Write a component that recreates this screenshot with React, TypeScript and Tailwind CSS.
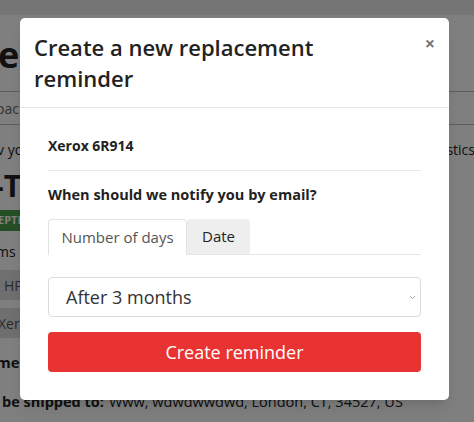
import { ChevronDown } from 'lucide-react'

const font = { fontFamily: '"Open Sans", "Liberation Sans", sans-serif' }

function BackgroundPage() {
  return (
    <div className="flex flex-col bg-white text-[#222]">
      <div className="h-[15px] bg-[#eaeaea]" />
      <div className="h-[76px] flex items-center pt-[4px] text-[36px] font-bold leading-none -ml-[2px]">e</div>
      <div className="h-[34px] flex items-center border-y border-[#bbb] text-[14px] text-[#666] -ml-[4px]">oac</div>
      <div className="h-[48px] flex items-center text-[14px] whitespace-nowrap -ml-[3px]">
        <span>v your</span>
        <span className="ml-[409px]">stics</span>
      </div>
      <div className="h-[26px] flex items-center text-[30px] font-bold leading-none -ml-[6px]">-T8</div>
      <div className="h-[37px] flex items-center pt-[6px]">
        <span className="bg-[#4a9d4c] text-white text-[11px] font-bold px-[4px] py-[2px] -ml-[6px]">EPTED</span>
      </div>
      <div className="h-[30px] flex items-center text-[14px] -ml-[4px]">ms</div>
      <div className="h-[38px] flex items-center">
        <div className="h-[30px] w-[60px] flex items-center bg-[#dfdfdf] text-[14px] text-[#555] pl-[4px]">HP</div>
      </div>
      <div className="h-[38px] flex items-center">
        <div className="h-[30px] w-[60px] flex items-center bg-[#dfdfdf] text-[14px] text-[#555] -ml-[2px]">Xerox</div>
      </div>
      <div className="h-[40px] flex items-center text-[15px] font-bold -ml-[4px]">me</div>
      <div className="h-[40px] flex items-center text-[14.5px] whitespace-nowrap pl-[2px]">
        <span className="font-bold">be shipped to:</span>
        <span className="ml-[5px]">Www, wdwdwwdwd, London, CT, 34527, US</span>
      </div>
    </div>
  )
}

function ReminderModal() {
  return (
    <div className="absolute left-[20px] top-[18px] w-[429px] rounded-[5px] bg-white shadow-lg">
      <div className="flex items-start justify-between border-b border-[#e6e6e6] pl-[14px] pr-[14px] pt-[14px] pb-[13px]">
        <h2 className="max-w-[330px] text-[22px] font-semibold leading-[31px] text-[#222]">
          Create a new replacement reminder
        </h2>
        <button className="mt-[2px] text-[18px] font-bold leading-none text-[#777]">×</button>
      </div>

      <div className="px-[28px] pt-[28px] pb-[28px]">
        <div className="text-[14px] font-bold leading-[20px] text-[#222]">Xerox 6R914</div>
        <div className="mt-[14px] h-px bg-[#e9e9e9]" />

        <div className="mt-[14px] text-[14.5px] font-bold leading-[20px] text-[#222]">
          When should we notify you by email?
        </div>

        <div className="mt-[14px] flex border-b border-[#e6e6e6]">
          <button className="-mb-px h-[36px] w-[139px] rounded-t-[4px] border border-b-0 border-[#e3e3e3] bg-white text-[15px] text-[#555]">
            Number of days
          </button>
          <button className="h-[35px] w-[63px] rounded-t-[4px] bg-[#eeeeee] text-[15px] text-[#222]">
            Date
          </button>
        </div>

        <div className="relative mt-[22px]">
          <select className="h-[40px] w-full appearance-none rounded-[4px] border border-[#dcdcdc] bg-white pl-[17px] text-[18px] text-[#333] outline-none" style={font}>
            <option>After 3 months</option>
          </select>
          <ChevronDown className="pointer-events-none absolute right-[4px] top-[16px] h-[9px] w-[9px] text-[#888]" strokeWidth={2} />
        </div>

        <button className="mt-[15px] h-[40px] w-full rounded-[4px] bg-[#e93232] text-[18px] text-white">
          Create reminder
        </button>
      </div>
    </div>
  )
}

export default function App() {
  return (
    <div className="relative h-[422px] w-[474px] overflow-hidden" style={font}>
      <BackgroundPage />
      <div className="absolute inset-0 bg-black/50" />
      <ReminderModal />
    </div>
  )
}
